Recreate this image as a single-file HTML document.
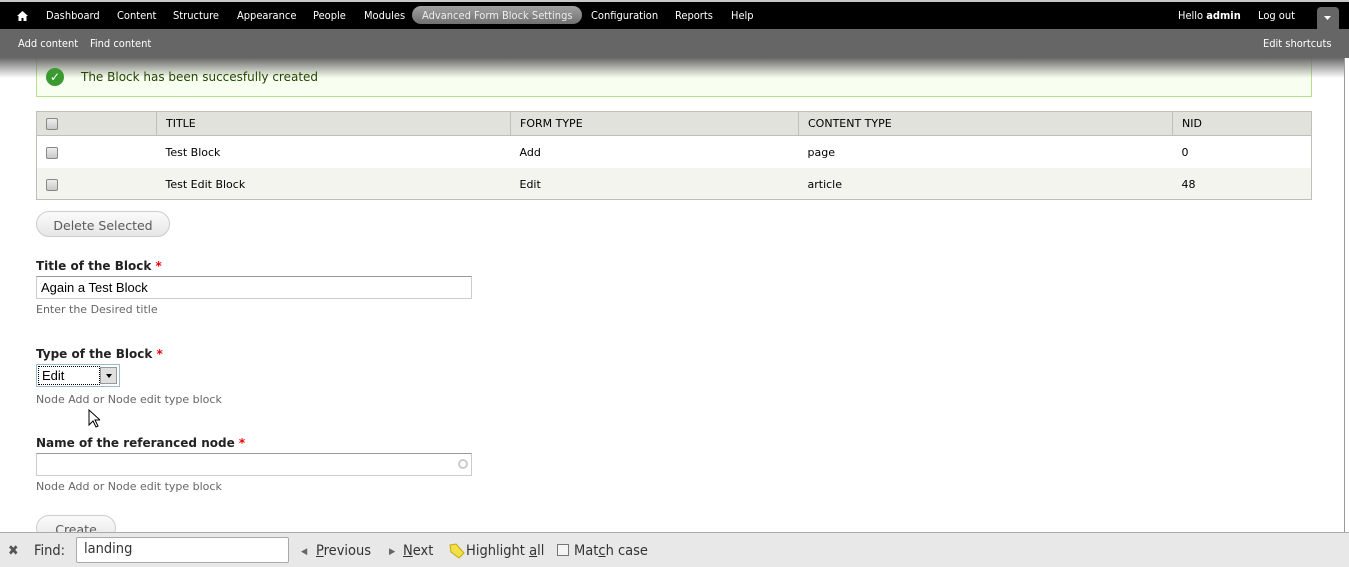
<!DOCTYPE html>
<html><head><meta charset="utf-8"><style>
*{margin:0;padding:0;box-sizing:border-box}
body{width:1349px;height:567px;overflow:hidden;background:#fff;font-family:"DejaVu Sans","Liberation Sans",sans-serif;position:relative;color:#333}
.a{position:absolute;white-space:nowrap}
#top{position:absolute;left:0;top:0;width:1349px;height:29px;background:#000;border-top:2px solid #c8c8c8}
#top span{position:absolute;top:7px;font-size:11px;color:#fff;font-family:"DejaVu Sans Condensed","DejaVu Sans",sans-serif}
#sec{position:absolute;left:0;top:29px;width:1349px;height:29px;background:#666}
#sec span{position:absolute;top:8px;font-size:11px;color:#fff;font-family:"DejaVu Sans Condensed","DejaVu Sans",sans-serif}
#shadow{position:absolute;left:0;top:58px;width:1345px;height:20px;background:linear-gradient(#6a6a6a,rgba(255,255,255,0))}
.msg{position:absolute;left:36px;top:58px;width:1276px;height:39px;border:1px solid #b8e08a;border-top:none;background:#f8fff0}
table{position:absolute;left:36px;top:111px;width:1276px;border-collapse:collapse;border:1px solid #bebfb9;font-size:11px;color:#000}
td,th{text-align:left;font-weight:normal;padding:0 0 0 9px}
th{background:#e1e2dc;height:24px;border-right:1px solid #bebfb9;border-bottom:1px solid #bebfb9}
tr.r1 td{background:#fff;height:32px;padding-top:2px}
tr.r2 td{background:#f3f4ee;height:32px;padding-top:2px}
.cb{display:inline-block;width:12px;height:12px;border:1px solid #888;background:linear-gradient(#eee,#c8c8c8);border-radius:2px;vertical-align:middle}
.btn{position:absolute;border:1px solid #ccc;border-radius:14px;background:linear-gradient(#fbfbfb,#e6e6e6);color:#5a5a5a;font-size:12.5px;text-align:center}
label{position:absolute;font-weight:bold;font-size:12px;color:#222}
label i{color:#e00;font-style:normal}
.in{position:absolute;border:1px solid #ccc;border-top-color:#999;background:#fff;font-size:13px;font-family:"Liberation Sans",sans-serif;color:#000}
.d{position:absolute;font-size:11px;color:#666}
#find{position:absolute;left:0;top:532px;width:1349px;height:35px;background:#e8e8e8;border-top:1px solid #aaa;font-family:"DejaVu Sans Condensed","DejaVu Sans",sans-serif;font-size:14.5px;color:#333}
#find span{position:absolute;top:10px}
</style></head><body>
<div id="top">
<svg style="position:absolute;left:17px;top:9px" width="11" height="10" viewBox="0 0 11 10"><path d="M5.5 0L0 5h1.5v5h3V7h2v3h3V5H11z" fill="#fff"/></svg>
<span style="left:46px">Dashboard</span><span style="left:117px">Content</span><span style="left:173px">Structure</span><span style="left:237px">Appearance</span><span style="left:313px">People</span><span style="left:364px">Modules</span>
<div style="position:absolute;left:412px;top:4px;width:170px;height:18px;border-radius:9px;background:linear-gradient(#a0a0a0,#707070)"></div>
<span style="left:422px;color:#eee">Advanced Form Block Settings</span>
<span style="left:591px">Configuration</span><span style="left:675px">Reports</span><span style="left:731px">Help</span>
<span style="left:1178px">Hello <b>admin</b></span><span style="left:1258px">Log out</span>
<div style="position:absolute;left:1317px;top:5px;width:22px;height:24px;background:#666;border-radius:4px 4px 0 0"></div>
<svg style="position:absolute;left:1324px;top:14px" width="7" height="4"><path d="M0 0h7L3.5 4z" fill="#fff"/></svg>
</div>
<div id="sec"><span style="left:18px">Add content</span><span style="left:90px">Find content</span><span style="left:1263px">Edit shortcuts</span></div>
<div class="msg"></div>
<div id="shadow"></div>
<div class="a" style="left:46px;top:68px;width:18px;height:18px;border-radius:50%;background:#3a9a30;color:#fff;font-size:12px;text-align:center;line-height:18px;font-weight:bold">&#10003;</div>
<div class="a" style="left:81px;top:70px;font-size:12px;color:#234600">The Block has been succesfully created</div>
<table>
<tr><th style="width:120px"><span class="cb"></span></th><th style="width:354px">TITLE</th><th style="width:288px">FORM TYPE</th><th style="width:374px">CONTENT TYPE</th><th style="border-right:none">NID</th></tr>
<tr class="r1"><td><span class="cb"></span></td><td>Test Block</td><td>Add</td><td>page</td><td>0</td></tr>
<tr class="r2"><td><span class="cb"></span></td><td>Test Edit Block</td><td>Edit</td><td>article</td><td>48</td></tr>
</table>
<div class="btn" style="left:36px;top:211px;width:134px;height:26px;line-height:27px">Delete Selected</div>
<label style="left:36px;top:259px">Title of the Block <i>*</i></label>
<div class="in" style="left:36px;top:276px;width:436px;height:23px;padding:3px 4px">Again a Test Block</div>
<div class="d" style="left:36px;top:303px">Enter the Desired title</div>
<label style="left:36px;top:347px">Type of the Block <i>*</i></label>
<div class="in" style="left:36px;top:364px;width:84px;height:23px;border:1px solid #9bc;padding:1px">
<div style="border:1px dotted #000;height:19px;width:62px;padding-left:3px;line-height:17px">Edit</div>
<div style="position:absolute;left:63px;top:2px;width:17px;height:17px;background:#e0e0e0;border:1px solid #999"><svg style="position:absolute;left:5px;top:6px" width="6" height="4"><path d="M0 0h6L3 4z" fill="#000"/></svg></div></div>
<div class="d" style="left:36px;top:393px">Node Add or Node edit type block</div>
<svg style="position:absolute;left:88px;top:409px" width="12" height="19" viewBox="0 0 12 19"><path d="M1 1v15l4-4 3 6 2-1-3-6h5z" fill="#fff" stroke="#000" stroke-width="1"/></svg>
<label style="left:36px;top:436px">Name of the referanced node <i>*</i></label>
<div class="in" style="left:36px;top:453px;width:436px;height:23px"><div style="position:absolute;right:3px;top:5px;width:10px;height:10px;border:2px solid #ccc;border-radius:50%"></div></div>
<div class="d" style="left:36px;top:480px">Node Add or Node edit type block</div>
<div class="btn" style="left:36px;top:515px;width:80px;height:26px;line-height:27px">Create</div>
<div class="a" style="left:1344px;top:58px;width:1px;height:474px;background:#999"></div>
<div id="find">
<span style="left:8px;color:#555;font-size:14px">&#10006;</span>
<span style="left:34px">Find:</span>
<div style="position:absolute;left:76px;top:4px;width:213px;height:26px;background:#fff;border:1px solid #aaa;border-radius:2px;padding:3px 7px;font-size:14.5px">landing</div>
<span style="left:301px;font-size:9px;top:14px;color:#666">&#9664;</span><span style="left:316px"><u>P</u>revious</span>
<span style="left:389px;font-size:9px;top:14px;color:#666">&#9654;</span><span style="left:403px"><u>N</u>ext</span>
<svg style="position:absolute;left:448px;top:10px" width="17" height="16"><path d="M2 2l6 -1 8 9-5 5-8-6z" fill="#f2e04a" stroke="#c8a800"/></svg><span style="left:466px">Highlight <u>a</u>ll</span>
<span style="left:557px;top:11px;width:12px;height:12px;border:1px solid #777;background:#f4f4f4"></span><span style="left:574px">Mat<u>c</u>h case</span>
</div>
</body></html>
